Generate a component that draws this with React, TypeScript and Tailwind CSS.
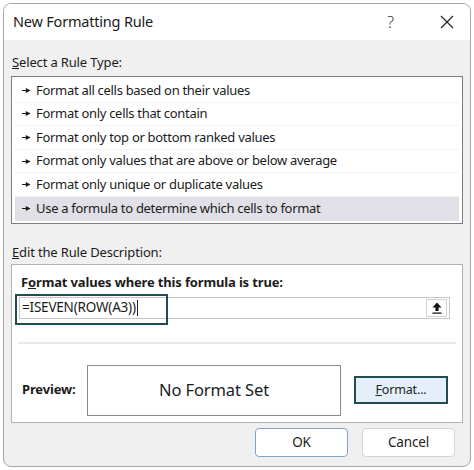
import React from "react";

const font = { fontFamily: '"Noto Sans", "Open Sans", sans-serif' };

const ruleTypes = [
  "Format all cells based on their values",
  "Format only cells that contain",
  "Format only top or bottom ranked values",
  "Format only values that are above or below average",
  "Format only unique or duplicate values",
  "Use a formula to determine which cells to format",
];

function Bullet() {
  return (
    <svg width="9" height="7" viewBox="0 0 9 7" className="shrink-0">
      <path d="M0 3.5h4.5" stroke="#1a1a1a" strokeWidth="1.2" />
      <path d="M3.8 1 8.5 3.5 3.8 6z" fill="#1a1a1a" />
    </svg>
  );
}

export default function App() {
  return (
    <div className="w-[474px] h-[470px] bg-white p-[3px] text-[#1b1b1b]" style={font}>
      <div className="h-full flex flex-col rounded-[8px] border border-[#a6a6a6] overflow-hidden bg-[#f0f0f0]">
        {/* title bar */}
        <div className="h-[36px] shrink-0 bg-white flex items-center pl-[9px] pr-[16px]">
          <span className="text-[14.5px] tracking-[-0.2px]">New Formatting Rule</span>
          <span className="ml-auto text-[16px] text-[#333] font-light">?</span>
          <svg width="14" height="14" viewBox="0 0 14 14" className="ml-[46px]">
            <path d="M1 1l12 12M13 1 1 13" stroke="#222" strokeWidth="1.2" />
          </svg>
        </div>

        <div className="flex-1 flex flex-col px-[7px] text-[13px] tracking-[-0.15px]">
          <div className="mt-[13px] h-[20px] flex items-center pl-[1px]">
            <span><u>S</u>elect a Rule Type:</span>
          </div>
          <div className="mt-[3px] w-[452px] border border-[#7d7d7d] bg-white px-[3px] pt-[2px] pb-[2px] tracking-[-0.3px]">
            {ruleTypes.map((t, i) => (
              <div
                key={t}
                className={`h-[23.6px] flex items-center gap-[5px] pl-[7px] ${
                  i === ruleTypes.length - 1 ? "bg-[#e0e0e6]" : "border-b border-[#f2f2f2]"
                }`}
              >
                <Bullet />
                <span>{t}</span>
              </div>
            ))}
          </div>

          <div className="mt-[19px] h-[20px] flex items-center pl-[1px]">
            <span><u>E</u>dit the Rule Description:</span>
          </div>
          <div className="mt-[1px] w-[452px] h-[159px] border border-[#b4b4b4] bg-white flex flex-col px-[6px]">
            <div className="mt-[8px] h-[20px] flex items-center pl-[3px] font-bold">
              <span>F<u>o</u>rmat values where this formula is true:</span>
            </div>
            <div className="relative mt-[4px] ml-[1px] w-[431px] h-[22px] border border-[#c6c6c6] flex items-center">
              <span className="pl-[2px] text-[13.5px] tracking-[-0.2px]">=ISEVEN(ROW(A3))</span>
              <span className="ml-[1px] w-[1px] h-[16px] bg-[#222]" />
              <div className="ml-auto mr-[2px] w-[21px] h-[18px] border border-[#d2d2d2] bg-white flex items-center justify-center">
                <svg width="10" height="12" viewBox="0 0 10 12">
                  <path d="M5 0.5 9.5 5.5H6.6V9H3.4V5.5H0.5z" fill="#111" />
                  <path d="M0.5 11.2h9" stroke="#111" strokeWidth="1.3" />
                </svg>
              </div>
              <div className="absolute left-[-5px] top-[-4px] w-[153px] h-[31px] border-2 border-[#1f4d51] pointer-events-none" />
            </div>
            <div className="mt-[23px] h-[2px] bg-[#e8e8e8]" />
            <div className="mt-[21px] flex items-center">
              <span className="w-[69px] pl-[4px] font-bold">Preview:</span>
              <div className="w-[254px] h-[51px] border border-[#8a8a8a] flex items-center justify-center text-[16.5px] tracking-[-0.1px]">
                No Format Set
              </div>
              <button className="ml-[13px] w-[94px] h-[28px] border-2 border-[#1f4d51] bg-[#e4eff9] text-[12.5px] text-[#222]">
                <u>F</u>ormat...
              </button>
            </div>
          </div>

          <div className="mt-[5px] flex justify-end gap-[14px] pr-[8px]">
            <button className="w-[93px] h-[29px] rounded-[4px] border border-[#7fa4c4] bg-white text-[13.5px]">
              OK
            </button>
            <button className="w-[93px] h-[29px] rounded-[4px] border border-[#d4d4d4] bg-white text-[13.5px]">
              Cancel
            </button>
          </div>
        </div>
      </div>
    </div>
  );
}
